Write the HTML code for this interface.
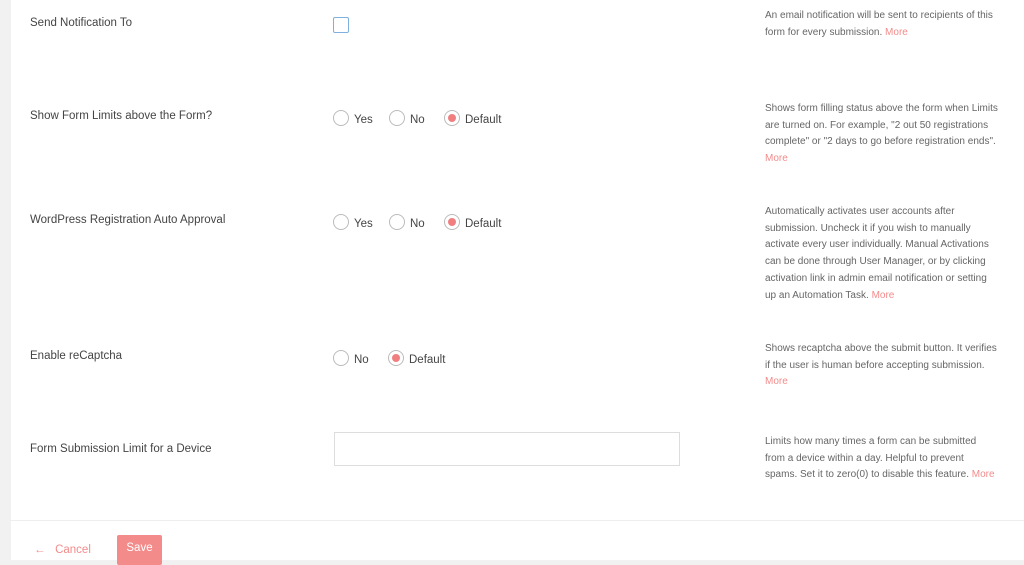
<!DOCTYPE html>
<html><head><meta charset="utf-8"><style>
body{margin:0;width:1024px;height:560px;background:#f1f1f1;font-family:"Liberation Sans",sans-serif;overflow:hidden;position:relative}
.panel{position:absolute;left:11px;top:0;width:1013px;height:560px;background:#fff}
.lbl{position:absolute;left:30px;font-size:11.5px;color:#444}
.desc{position:absolute;left:765px;font-size:10px;line-height:16.7px;color:#666;white-space:nowrap}
.more{color:#f38b8b}
.r{position:absolute;width:16px;height:16px;border:1px solid #bbb;border-radius:50%;background:#fff;box-sizing:border-box}
.r.on::after{content:"";position:absolute;left:3px;top:3px;width:8px;height:8px;border-radius:50%;background:#f08080}
.rt{position:absolute;font-size:11.5px;color:#444}
</style></head><body>
<div class="panel"></div>
<div class="lbl" style="top:17px">Send Notification To</div>
<div style="position:absolute;left:333px;top:17px;width:16px;height:16px;border:1.5px solid #7fb0e0;border-radius:2px;box-sizing:border-box"></div>
<div class="desc" style="top:8px">An email notification will be sent to recipients of this<br>form for every submission. <span class="more">More</span></div>

<div class="lbl" style="top:110px">Show Form Limits above the Form?</div>
<div class="r" style="left:333px;top:110px"></div><div class="rt" style="left:354px;top:114px">Yes</div>
<div class="r" style="left:389px;top:110px"></div><div class="rt" style="left:410px;top:114px">No</div>
<div class="r on" style="left:444px;top:110px"></div><div class="rt" style="left:465px;top:114px">Default</div>
<div class="desc" style="top:101px">Shows form filling status above the form when Limits<br>are turned on. For example, "2 out 50 registrations<br>complete" or "2 days to go before registration ends".<br><span class="more">More</span></div>

<div class="lbl" style="top:214px">WordPress Registration Auto Approval</div>
<div class="r" style="left:333px;top:214px"></div><div class="rt" style="left:354px;top:218px">Yes</div>
<div class="r" style="left:389px;top:214px"></div><div class="rt" style="left:410px;top:218px">No</div>
<div class="r on" style="left:444px;top:214px"></div><div class="rt" style="left:465px;top:218px">Default</div>
<div class="desc" style="top:204px">Automatically activates user accounts after<br>submission. Uncheck it if you wish to manually<br>activate every user individually. Manual Activations<br>can be done through User Manager, or by clicking<br>activation link in admin email notification or setting<br>up an Automation Task. <span class="more">More</span></div>

<div class="lbl" style="top:350px">Enable reCaptcha</div>
<div class="r" style="left:333px;top:350px"></div><div class="rt" style="left:354px;top:354px">No</div>
<div class="r on" style="left:388px;top:350px"></div><div class="rt" style="left:409px;top:354px">Default</div>
<div class="desc" style="top:341px">Shows recaptcha above the submit button. It verifies<br>if the user is human before accepting submission.<br><span class="more">More</span></div>

<div class="lbl" style="top:443px">Form Submission Limit for a Device</div>
<div style="position:absolute;left:334px;top:432px;width:346px;height:34px;border:1px solid #ddd;box-sizing:border-box"></div>
<div class="desc" style="top:434px">Limits how many times a form can be submitted<br>from a device within a day. Helpful to prevent<br>spams. Set it to zero(0) to disable this feature. <span class="more">More</span></div>

<div style="position:absolute;left:11px;top:520px;width:1013px;height:1px;background:#eee"></div>
<div style="position:absolute;left:34px;top:544px;font-size:11.5px;color:#f38b8b">←&nbsp;&nbsp; Cancel</div>
<div style="position:absolute;left:117px;top:535px;width:45px;height:30px;background:#f38b8b;border-radius:2px;color:#fff;font-size:11.5px;text-align:center;line-height:27px">Save</div>
</body></html>
